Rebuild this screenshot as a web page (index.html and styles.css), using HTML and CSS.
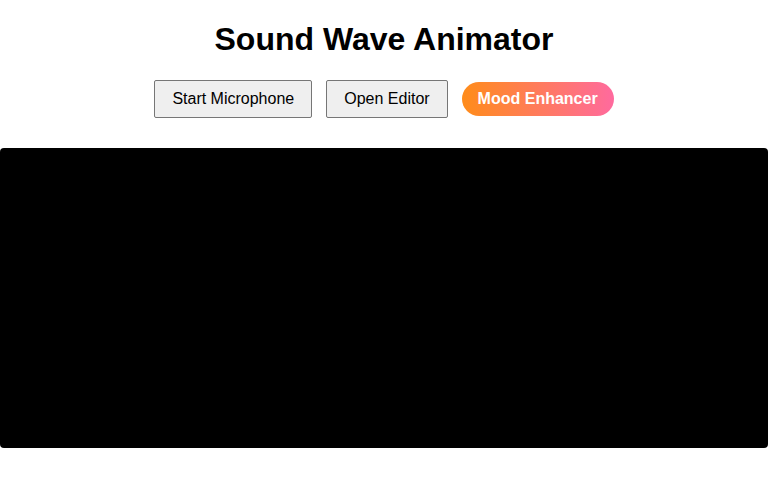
FILE: index.html
```html
<!DOCTYPE html>
<html lang="en">
<head>
  <meta charset="UTF-8" />
  <meta name="viewport" content="width=device-width, initial-scale=1.0"/>
  <title>Sound Wave Animator</title>
  <link rel="stylesheet" href="styles.css">
</head>
<body>
  <h1>Sound Wave Animator</h1>
  <div class="controls">
    <button id="micBtn">Start Microphone</button>
    <button id="editorBtn">Open Editor</button>
    <button id="moodBtn" class="mood-btn">Mood Enhancer</button>
  </div>
  <canvas id="waveCanvas" class="wave-canvas" width="768" height="300"></canvas>
</body>
</html>
```

FILE: styles.css
```css
body {font-family: "Liberation Sans", Arial, sans-serif; background-color: #ffffff; margin: 0; padding: 0; text-align: center; color: #000;}
h1 {font-size: 32px; font-weight: bold; margin: 21.44px 0;}
.controls {display: flex; justify-content: center; align-items: center; gap: 14px;}
.controls button {font-family: "Liberation Sans", Arial, sans-serif; font-size: 16px; line-height: 18px; padding: 9px 17px; background-color: #efefef; color: #000; border: 1px solid #767676; border-radius: 2px; cursor: pointer;}
.controls .mood-btn {background: linear-gradient(90deg, #ff8c1a, #ff6a9e); color: #fff; font-weight: bold; border: none; border-radius: 17px; padding: 8px 16px;}
/* canvas */
.wave-canvas {display: block; width: 100%; height: 300px; margin-top: 30px; background-color: #000; border-radius: 4px;}
```
